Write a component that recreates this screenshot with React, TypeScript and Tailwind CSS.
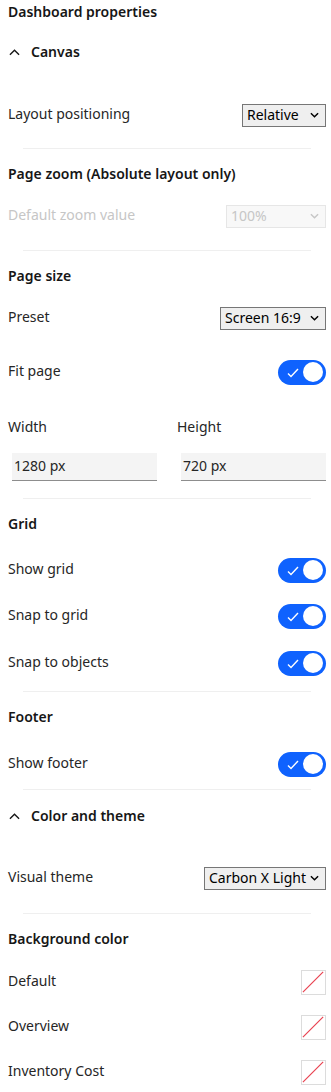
import React from 'react'

const font = { fontFamily: '"Noto Sans", "Open Sans", Arial, sans-serif' }

function Chevron({ className = '' }: { className?: string }) {
  return (
    <svg viewBox="0 0 10 6" className={className} fill="none" stroke="currentColor" strokeWidth="1.6">
      <path d="M1 1l4 4 4-4" />
    </svg>
  )
}

function Select({ value, width, disabled }: { value: string; width: string; disabled?: boolean }) {
  return (
    <div
      className={`${width} h-[23px] flex items-center justify-between pl-[4px] pr-[4px] text-[14px] leading-none whitespace-nowrap border ${
        disabled ? 'border-[#e6e6e6] bg-[#f8f8f8] text-[#c6c6c6]' : 'border-[#767676] bg-[#efefef] text-black'
      }`}
    >
      <span className="-mt-px">{value}</span>
      <Chevron className={`w-[9px] h-[6px] mr-[2px] shrink-0 ${disabled ? 'text-[#c6c6c6]' : 'text-black'}`} />
    </div>
  )
}

function Toggle() {
  return (
    <div className="relative w-[48px] h-[25px] rounded-full bg-[#0f62fe]">
      <svg viewBox="0 0 12 10" className="absolute left-[9px] top-[8px] w-[12px] h-[10px]" fill="none" stroke="white" strokeWidth="1.4">
        <path d="M1 5.5l3 3 7-7.5" />
      </svg>
      <div className="absolute right-[3px] top-[2.5px] w-[20px] h-[20px] rounded-full bg-white" />
    </div>
  )
}

function Swatch() {
  return (
    <div className="relative w-[25px] h-[25px] border border-[#dcdcdc] bg-white">
      <svg viewBox="0 0 25 25" className="absolute inset-0 w-full h-full">
        <path d="M1 23L23 1" stroke="#e8404f" strokeWidth="1.2" />
      </svg>
    </div>
  )
}

function Divider({ mt }: { mt: string }) {
  return <div className={`${mt} ml-[15px] mr-[15px] h-px bg-[#efefef]`} />
}

function Row({ label, mt, children, disabled }: { label: string; mt: string; children: React.ReactNode; disabled?: boolean }) {
  return (
    <div className={`${mt} h-[24px] flex items-center justify-between`}>
      <span className={`-mt-[3px] text-[14px] ${disabled ? 'text-[#c6c6c6]' : 'text-[#262626]'}`}>{label}</span>
      {children}
    </div>
  )
}

function Heading({ text, mt }: { text: string; mt: string }) {
  return (
    <div className={`${mt} h-[24px] flex items-center text-[14px] font-semibold text-[#161616]`}>
      <span className="-mt-[2px]">{text}</span>
    </div>
  )
}

function Section({ text, mt }: { text: string; mt: string }) {
  return (
    <div className={`${mt} h-[24px] flex items-center gap-[11px] text-[14px] font-semibold text-[#161616]`}>
      <svg viewBox="0 0 12 7" className="w-[11px] h-[7px] ml-[1px]" fill="none" stroke="#161616" strokeWidth="1.5">
        <path d="M1 6l5-5 5 5" />
      </svg>
      <span className="-mt-[2px]">{text}</span>
    </div>
  )
}

export default function App() {
  return (
    <div className="w-[331px] h-[1092px] bg-white pl-[8px] pr-[5px] overflow-hidden" style={font}>
      <div className="h-[24px] flex items-center text-[14px] font-semibold text-[#161616]">
        <span className="-mt-[2px]">Dashboard properties</span>
      </div>

      <Section text="Canvas" mt="mt-[16px]" />
      <Row label="Layout positioning" mt="mt-[39px]">
        <Select value="Relative" width="w-[84px]" />
      </Row>
      <Divider mt="mt-[21px]" />

      <Heading text="Page zoom (Absolute layout only)" mt="mt-[13px]" />
      <Row label="Default zoom value" mt="mt-[18px]" disabled>
        <Select value="100%" width="w-[100px]" disabled />
      </Row>
      <Divider mt="mt-[22px]" />

      <Heading text="Page size" mt="mt-[13px]" />
      <Row label="Preset" mt="mt-[18px]">
        <Select value="Screen 16:9" width="w-[106px]" />
      </Row>
      <Row label="Fit page" mt="mt-[30px]">
        <Toggle />
      </Row>
      <div className="mt-[32px] h-[24px] grid grid-cols-2 gap-[24px] items-center text-[14px] text-[#262626]">
        <span className="-mt-[3px]">Width</span>
        <span className="-mt-[3px] -ml-[2px]">Height</span>
      </div>
      <div className="mt-[13px] grid grid-cols-2 gap-[24px] pl-[4px]">
        <div className="h-[28px] bg-[#f4f4f4] border-b border-[#8d8d8d] flex items-center px-[2px] text-[14px] text-[#262626]">
          <span className="-mt-[3px]">1280 px</span>
        </div>
        <div className="h-[28px] bg-[#f4f4f4] border-b border-[#8d8d8d] flex items-center px-[2px] text-[14px] text-[#262626]">
          <span className="-mt-[3px]">720 px</span>
        </div>
      </div>
      <Divider mt="mt-[17px]" />

      <Heading text="Grid" mt="mt-[13px]" />
      <Row label="Show grid" mt="mt-[22px]">
        <Toggle />
      </Row>
      <Row label="Snap to grid" mt="mt-[22px]">
        <Toggle />
      </Row>
      <Row label="Snap to objects" mt="mt-[23px]">
        <Toggle />
      </Row>
      <Divider mt="mt-[16px]" />

      <Heading text="Footer" mt="mt-[13px]" />
      <Row label="Show footer" mt="mt-[23px]">
        <Toggle />
      </Row>
      <Divider mt="mt-[13px]" />

      <Section text="Color and theme" mt="mt-[14px]" />
      <Row label="Visual theme" mt="mt-[38px]">
        <Select value="Carbon X Light" width="w-[122px]" />
      </Row>
      <Divider mt="mt-[23px]" />

      <Heading text="Background color" mt="mt-[13px]" />
      <Row label="Default" mt="mt-[19px]">
        <Swatch />
      </Row>
      <Row label="Overview" mt="mt-[21px]">
        <Swatch />
      </Row>
      <Row label="Inventory Cost" mt="mt-[21px]">
        <Swatch />
      </Row>
    </div>
  )
}
